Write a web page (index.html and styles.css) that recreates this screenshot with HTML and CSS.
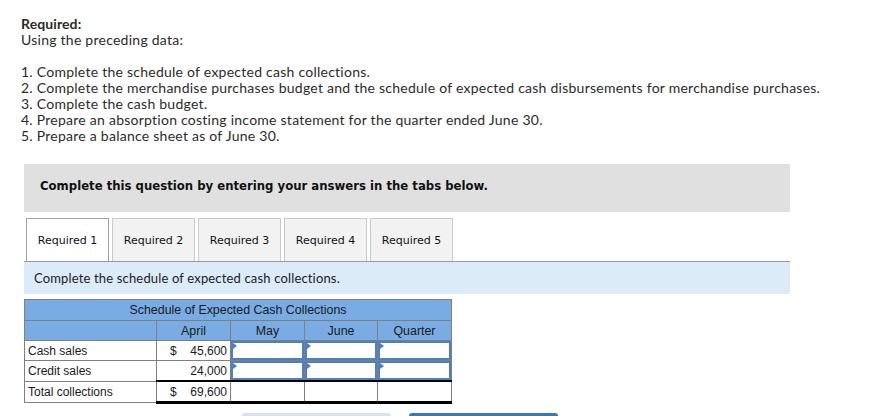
FILE: index.html
```html
<!DOCTYPE html>
<html>
<head>
<meta charset="utf-8">
<link rel="stylesheet" href="styles.css">
</head>
<body>
<div class="page">
  <div class="intro">
    <div class="req-title">Required:</div>
    <div>Using the preceding data:</div>
    <div class="blank">&nbsp;</div>
    <div>1. Complete the schedule of expected cash collections.</div>
    <div>2. Complete the merchandise purchases budget and the schedule of expected cash disbursements for merchandise purchases.</div>
    <div>3. Complete the cash budget.</div>
    <div>4. Prepare an absorption costing income statement for the quarter ended June 30.</div>
    <div>5. Prepare a balance sheet as of June 30.</div>
  </div>

  <div class="question-box">Complete this question by entering your answers in the tabs below.</div>

  <div class="tabs">
    <div class="tab active">Required 1</div>
    <div class="tab">Required 2</div>
    <div class="tab">Required 3</div>
    <div class="tab">Required 4</div>
    <div class="tab">Required 5</div>
  </div>

  <div class="instruction">Complete the schedule of expected cash collections.</div>

  <table class="schedule">
    <colgroup>
      <col class="c-label">
      <col class="c-num">
      <col class="c-num">
      <col class="c-num2">
      <col class="c-num">
    </colgroup>
    <tr class="head">
      <th colspan="5" class="title">Schedule of Expected Cash Collections</th>
    </tr>
    <tr class="head">
      <th></th>
      <th>April</th>
      <th>May</th>
      <th>June</th>
      <th>Quarter</th>
    </tr>
    <tr>
      <td class="label">Cash sales</td>
      <td class="amt"><span class="cur">$</span><span class="val">45,600</span></td>
      <td class="in"><div class="box"><span class="flag"></span></div></td>
      <td class="in"><div class="box"><span class="flag"></span></div></td>
      <td class="in"><div class="box"><span class="flag"></span></div></td>
    </tr>
    <tr>
      <td class="label">Credit sales</td>
      <td class="amt"><span class="val">24,000</span></td>
      <td class="in"><div class="box"><span class="flag"></span></div></td>
      <td class="in"><div class="box"><span class="flag"></span></div></td>
      <td class="in"><div class="box"><span class="flag"></span></div></td>
    </tr>
    <tr class="total">
      <td class="label">Total collections</td>
      <td class="amt"><span class="cur">$</span><span class="val">69,600</span></td>
      <td></td>
      <td></td>
      <td></td>
    </tr>
  </table>

  <div class="buttons">
    <div class="btn prev"></div>
    <div class="btn next"></div>
  </div>
</div>
</body>
</html>
```

FILE: styles.css
```css
html, body {
  margin: 0;
  padding: 0;
  background: #ffffff;
  overflow: hidden;
}

.page {
  padding: 16px 0 0 24px;
  width: 766px;
}

.intro {
  font-family: Lato, "Open Sans", sans-serif;
  font-size: 14px;
  letter-spacing: 0.25px;
  line-height: 16px;
  color: #2b2b2b;
  margin-left: -3px;
  white-space: nowrap;
}

.req-title {
  font-weight: bold;
  letter-spacing: 0.1px;
}

.question-box {
  margin-top: 20px;
  height: 43px;
  background: #e0e0e0;
  display: flex;
  align-items: center;
  padding-left: 16px;
  padding-bottom: 5px;
  font-family: "DejaVu Sans", Verdana, sans-serif;
  font-weight: bold;
  font-size: 11.7px;
  color: #111111;
}

.tabs {
  margin-top: 6px;
  display: flex;
  gap: 3px;
  padding-left: 2px;
  border-bottom: 1px solid #9a9a9a;
  height: 43px;
  align-items: flex-end;
}

.tab {
  width: 81px;
  height: 42px;
  border: 1px solid #c9c9c9;
  border-bottom: none;
  background: #f2f2f2;
  display: flex;
  align-items: center;
  justify-content: center;
  font-family: "DejaVu Sans", Verdana, sans-serif;
  font-size: 11px;
  color: #111111;
}

.tab.active {
  background: #ffffff;
  border-color: #a3a3a3;
}

.instruction {
  height: 32px;
  background: #dbebf8;
  display: flex;
  align-items: center;
  padding-left: 10px;
  font-family: Lato, "Open Sans", sans-serif;
  font-size: 13px;
  letter-spacing: 0.16px;
  color: #222222;
}

.schedule {
  margin-top: 5px;
  border-collapse: collapse;
  font-family: "Liberation Sans", Arial, sans-serif;
  font-size: 12px;
  color: #1a1a1a;
  width: 428px;
  table-layout: fixed;
  border: 1px solid #7f7f7f;
}

.c-label { width: 132px; }
.c-num { width: 74px; }
.c-num2 { width: 73px; }

.schedule th {
  background: #79ace3;
  font-weight: normal;
  border: 1px solid #7f7f7f;
  height: 19px;
  padding: 0;
  text-align: center;
  color: #1a1a1a;
  font-size: 12.4px;
}

.schedule th.title {
  height: 20px;
}

.schedule td {
  border: 1px solid #7f7f7f;
  height: 19px;
  padding: 0;
  line-height: 14px;
}

.schedule td.label {
  padding-left: 3px;
}

.schedule td.amt {
  padding: 0 3px 0 13px;
  white-space: nowrap;
}

.amt .cur {
  float: left;
}

.amt .val {
  float: right;
}

.schedule td.in {
  padding: 0;
}

.box {
  position: relative;
  height: 15px;
  border: 2px solid #4e7fc0;
}

.flag {
  position: absolute;
  left: 0;
  top: 0;
  width: 0;
  height: 0;
  border-top: 3px solid transparent;
  border-bottom: 3px solid transparent;
  border-left: 4px solid #4e7fc0;
}

.schedule tr.total td {
  height: 19px;
}

.schedule tr.total td:not(.label) {
  border-top: 2px solid #000000;
  border-bottom: 3px solid #000000;
}

.buttons {
  display: flex;
  margin-top: 9px;
  margin-left: 218px;
  gap: 18px;
}

.btn {
  width: 149px;
  height: 36px;
  border-radius: 3px;
}

.btn.prev {
  background: #d6e4f2;
}

.btn.next {
  background: #3a77b8;
}
```
